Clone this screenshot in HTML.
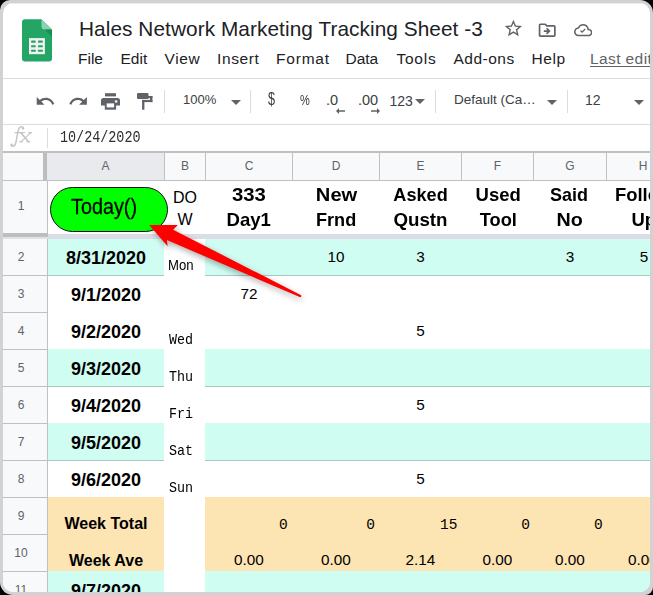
<!DOCTYPE html>
<html><head><meta charset="utf-8">
<style>
*{box-sizing:border-box}
html,body{margin:0;padding:0}
body{width:653px;height:595px;overflow:hidden;background:#000;position:relative;font-family:"Liberation Sans",sans-serif}
#frame{position:absolute;left:0;top:0;width:653px;height:595px;background:#d2d2d2;border-radius:10px 13px 8px 13px}
#app{position:absolute;left:3px;top:3px;width:647px;height:589px;background:#fff;border-radius:10px;overflow:hidden}
#c{position:absolute;left:-3px;top:-3px;width:653px;height:595px}
.a{position:absolute;white-space:pre}
.hl{position:absolute;height:1px;background:#dadce0}
.vl{position:absolute;width:1px;background:#dadce0}
.menu{font-size:15.5px;color:#202124;line-height:18px;top:50px}
.tb{color:#3c4043;font-size:13px;line-height:16px}
.ch{font-size:12px;color:#5f6368;line-height:14px;text-align:center}
.rh{font-size:12px;color:#5f6368;line-height:14px;text-align:center;left:1px;width:40px}
.h1{width:100px;text-align:center;font-weight:700;color:#000;font-size:19px;line-height:25px}
.h1 span{display:inline-block}
.bold{font-weight:700;color:#000;font-size:18px;line-height:22px;text-align:center}
.mono{font-family:"Liberation Mono",monospace;font-size:14px;color:#000;line-height:16px}
.z{font-size:14.5px;text-align:right;letter-spacing:0}
.dw{font-size:15px;transform:scaleX(0.89);transform-origin:0 0}
.num{font-size:15.3px;color:#000;line-height:16px;text-align:center}
</style></head><body>
<div id="frame"><div id="app"><div id="c">

<div class="a" style="left:0;top:3px;width:653px;height:1px;background:#ebebeb"></div>
<!-- logo -->
<svg class="a" style="left:22px;top:19px" width="30" height="43" viewBox="0 0 30 43">
  <path d="M3 0.2H19.5L30 10.5V39.5A3 3 0 0 1 27 42.5H3A3 3 0 0 1 0 39.5V3.2A3 3 0 0 1 3 0.2Z" fill="#23a566"/>
  <path d="M19.5 0.2L30 10.5H22.5A3 3 0 0 1 19.5 7.5Z" fill="#8ed1b1"/>
  <path d="M22.5 10.5L30 18V10.5Z" fill="#1c8d55"/>
  <rect x="7" y="19.1" width="15.9" height="16.1" fill="#f1f1f1"/>
  <rect x="9.1" y="21.6" width="4.6" height="2.1" rx="0.6" fill="#23a566"/><rect x="16" y="21.6" width="4.8" height="2.1" rx="0.6" fill="#23a566"/>
  <rect x="9.1" y="26.2" width="4.6" height="2.1" rx="0.6" fill="#23a566"/><rect x="16" y="26.2" width="4.8" height="2.1" rx="0.6" fill="#23a566"/>
  <rect x="9.1" y="30.75" width="4.6" height="2.1" rx="0.6" fill="#23a566"/><rect x="16" y="30.75" width="4.8" height="2.1" rx="0.6" fill="#23a566"/>
</svg>

<div class="a" style="left:79px;top:16.5px;font-size:20.8px;line-height:24px;color:#202124;letter-spacing:0.07px">Hales Network Marketing Tracking Sheet -3</div>

<!-- star -->
<svg class="a" style="left:503px;top:18px" width="20.8" height="20.8" viewBox="0 0 24 24"><path fill="#5f6368" d="M22 9.24l-7.19-.62L12 2 9.19 8.63 2 9.24l5.46 4.73L5.82 21 12 17.27 18.18 21l-1.63-7.03L22 9.24zM12 15.4l-3.76 2.27 1-4.28-3.32-2.88 4.38-.38L12 6.1l1.71 4.04 4.38.38-3.32 2.88 1 4.28L12 15.4z"/></svg>
<!-- folder -->
<svg class="a" style="left:537.3px;top:19.6px" width="20.4" height="20.4" viewBox="0 0 24 24"><path fill="#5f6368" d="M20 6h-8l-2-2H4c-1.1 0-1.99.9-1.99 2L2 18c0 1.1.9 2 2 2h16c1.1 0 2-.9 2-2V8c0-1.1-.9-2-2-2zm0 12H4V6h5.17l2 2H20v10zm-7.84-6H8v2h4.16l-1.59 1.59L11.99 17 16 13.01 11.99 9l-1.41 1.41L12.16 12z"/></svg>
<!-- cloud -->
<svg class="a" style="left:573.5px;top:20.8px" width="18.4" height="18.4" viewBox="0 0 24 24"><path fill="#5f6368" d="M19.35 10.04C18.67 6.59 15.64 4 12 4 9.11 4 6.6 5.64 5.35 8.04 2.34 8.36 0 10.91 0 14c0 3.31 2.69 6 6 6h13c2.760 0 5-2.24 5-5 0-2.64-2.05-4.78-4.65-4.96zM19 18H6c-2.21 0-4-1.79-4-4 0-2.05 1.53-3.76 3.56-3.970l1.07-.11.5-.95C8.08 7.14 9.94 6 12 6c2.62 0 4.88 1.86 5.39 4.43l.3 1.5 1.53.11c1.56.1 2.78 1.41 2.78 2.96 0 1.65-1.35 3-3 3zm-8.5-2.3l-2.6-2.6 1.1-1.1 1.5 1.5 3.6-3.6 1.1 1.1z"/></svg>

<!-- menu -->
<div class="a menu" style="left:78px">File</div>
<div class="a menu" style="left:120.5px">Edit</div>
<div class="a menu" style="left:164.5px;letter-spacing:0.6px">View</div>
<div class="a menu" style="left:217px;letter-spacing:0.6px">Insert</div>
<div class="a menu" style="left:276px;letter-spacing:0.8px">Format</div>
<div class="a menu" style="left:345.5px">Data</div>
<div class="a menu" style="left:396.5px;letter-spacing:0.75px">Tools</div>
<div class="a menu" style="left:453.5px;letter-spacing:0.5px">Add-ons</div>
<div class="a menu" style="left:531.5px;letter-spacing:0.6px">Help</div>
<div class="a menu" style="left:590px;color:#5f6368;text-decoration:underline;letter-spacing:0.4px;text-underline-offset:1.8px">Last edit was seconds ago</div>

<div class="hl" style="left:0;top:78px;width:653px"></div>

<!-- toolbar icons -->
<svg class="a" style="left:34.5px;top:90.7px" width="20.6" height="20.6" viewBox="0 0 24 24"><path fill="#5f6368" d="M12.5 8c-2.65 0-5.05.99-6.9 2.6L2 7v9h9l-3.62-3.62c1.39-1.16 3.16-1.88 5.12-1.88 3.54 0 6.550 2.31 7.6 5.5l2.37-.78C21.08 11.03 17.15 8 12.5 8z"/></svg>
<svg class="a" style="left:68px;top:90.7px" width="20.6" height="20.6" viewBox="0 0 24 24"><path fill="#5f6368" d="M18.4 10.6C16.55 8.99 14.15 8 11.5 8c-4.65 0-8.58 3.03-9.96 7.22L3.9 16c1.05-3.19 4.05-5.5 7.6-5.5 1.95 0 3.73.72 5.12 1.88L13 16h9V7l-3.6 3.6z"/></svg>
<svg class="a" style="left:101px;top:93px" width="19" height="17" viewBox="0 0 19 17">
  <rect x="4" y="0.2" width="11" height="3.2" fill="#5f6368"/>
  <path d="M2.5 5H16.5A2.5 2.5 0 0 1 19 7.5V12.4H0V7.5A2.5 2.5 0 0 1 2.5 5Z" fill="#5f6368"/>
  <rect x="3.8" y="9.5" width="11.3" height="7.2" fill="#5f6368"/>
  <rect x="5.7" y="10.4" width="7.4" height="4" fill="#fff"/>
  <rect x="13.9" y="7.4" width="2.4" height="2.1" fill="#fff"/>
</svg>
<svg class="a" style="left:136.5px;top:93px" width="16" height="17" viewBox="0 0 16 17">
  <rect x="0" y="0" width="11.5" height="6" rx="1" fill="#5f6368"/>
  <rect x="13" y="3" width="2.4" height="6.1" fill="#5f6368"/><rect x="11" y="3" width="4.4" height="2.2" fill="#5f6368"/>
  <rect x="5.1" y="6.9" width="10.3" height="2.2" fill="#5f6368"/>
  <rect x="5.1" y="6.9" width="2.3" height="9.8" fill="#5f6368"/>
</svg>
<div class="vl" style="left:164px;top:90px;height:23px"></div>
<div class="a tb" style="left:183px;top:92px">100%</div>
<svg class="a" style="left:231px;top:100px" width="10" height="5" viewBox="0 0 10 5"><path d="M0 0H10L5 5Z" fill="#5f6368"/></svg>
<div class="vl" style="left:250px;top:90px;height:23px"></div>
<div class="a" style="left:268.3px;top:90px;font-size:17.5px;line-height:18px;color:#3c4043;transform:scaleX(0.72);transform-origin:0 0">$</div>
<div class="a tb" style="left:299.5px;top:92px;font-size:14.5px;transform:scaleX(0.76);transform-origin:0 0">%</div>
<div class="a tb" style="left:326px;top:92px;font-size:14.5px">.0</div>
<svg class="a" style="left:336px;top:107.5px" width="9" height="6" viewBox="0 0 9 6"><path d="M0 3L3 0V2.2H9V3.8H3V6Z" fill="#5f6368"/></svg>
<div class="a tb" style="left:358px;top:92px;font-size:14.5px">.00</div>
<svg class="a" style="left:371px;top:107.5px" width="9" height="6" viewBox="0 0 9 6"><path d="M9 3L6 0V2.2H0V3.8H6V6Z" fill="#5f6368"/></svg>
<div class="a tb" style="left:389.5px;top:92.5px;font-size:14px">123</div>
<svg class="a" style="left:415px;top:99px" width="10" height="5" viewBox="0 0 10 5"><path d="M0 0H10L5 5Z" fill="#5f6368"/></svg>
<div class="vl" style="left:435px;top:90px;height:23px"></div>
<div class="a tb" style="left:454px;top:92px;font-size:13.5px">Default (Ca…</div>
<svg class="a" style="left:547px;top:99.5px" width="10" height="5" viewBox="0 0 10 5"><path d="M0 0H10L5 5Z" fill="#5f6368"/></svg>
<div class="vl" style="left:567px;top:90px;height:23px"></div>
<div class="a tb" style="left:585px;top:92px;font-size:14px">12</div>
<svg class="a" style="left:634px;top:99.5px" width="10" height="5" viewBox="0 0 10 5"><path d="M0 0H10L5 5Z" fill="#5f6368"/></svg>

<div class="hl" style="left:0;top:124px;width:653px"></div>

<!-- formula bar -->
<svg class="a" style="left:0;top:120px" width="40" height="30" viewBox="0 120 40 30" fill="none" stroke="#c4c4c4" stroke-linecap="round">
  <path d="M23.4 128.4C23.6 126.8 21.6 126.2 20.2 127.2C18.6 128.3 18 130.5 17.5 133.5L16 142C15.5 144.6 14.2 146.3 12.6 146.3C11.6 146.3 11.1 145.6 11.3 144.8" stroke-width="1.45"/>
  <circle cx="23" cy="128.4" r="1.2" fill="#c4c4c4" stroke="none"/>
  <circle cx="11.6" cy="144.8" r="1.2" fill="#c4c4c4" stroke="none"/>
  <path d="M15 132.6H24.5M28.6 132.6H31.8M19.5 141.8H22.6M26.6 141.8H30" stroke-width="1.1"/>
  <path d="M20.6 132.6L28.6 141.8" stroke-width="1.6"/>
  <path d="M30.8 132.6L21 141.8" stroke-width="1.1"/>
</svg>
<div class="vl" style="left:47px;top:128px;height:20px;background:#dadce0"></div>
<div class="a mono" style="left:60px;top:128.8px;font-size:16.5px;line-height:18px;color:#2d2f31;transform:scaleX(0.813);transform-origin:0 0">10/24/2020</div>

<!-- grid header -->
<div class="a" style="left:0;top:151px;width:653px;height:2px;background:#c0c0c0"></div>
<div class="a" style="left:0;top:153px;width:43px;height:27px;background:#f8f9fa"></div>
<div class="a" style="left:43px;top:153px;width:4px;height:27px;background:#bdbdbd"></div>
<div class="a" style="left:47px;top:153px;width:117px;height:27px;background:#e8eaed"></div>
<div class="a" style="left:165px;top:153px;width:488px;height:27px;background:#f8f9fa"></div>
<div class="vl" style="left:164px;top:153px;height:27px;background:#c0c0c0"></div>
<div class="vl" style="left:205px;top:153px;height:27px;background:#c0c0c0"></div>
<div class="vl" style="left:292px;top:153px;height:27px;background:#c0c0c0"></div>
<div class="vl" style="left:379px;top:153px;height:27px;background:#c0c0c0"></div>
<div class="vl" style="left:461px;top:153px;height:27px;background:#c0c0c0"></div>
<div class="vl" style="left:533px;top:153px;height:27px;background:#c0c0c0"></div>
<div class="vl" style="left:606px;top:153px;height:27px;background:#c0c0c0"></div>
<div class="a" style="left:0;top:180px;width:653px;height:1px;background:#c0c0c0"></div>
<div class="a ch" style="left:47px;top:159px;width:117px">A</div>
<div class="a ch" style="left:165px;top:159px;width:40px">B</div>
<div class="a ch" style="left:206px;top:159px;width:86px">C</div>
<div class="a ch" style="left:293px;top:159px;width:86px">D</div>
<div class="a ch" style="left:380px;top:159px;width:81px">E</div>
<div class="a ch" style="left:462px;top:159px;width:71px">F</div>
<div class="a ch" style="left:534px;top:159px;width:72px">G</div>
<div class="a ch" style="left:607px;top:159px;width:72px">H</div>

<!-- row header column -->
<div class="a" style="left:0;top:181px;width:47px;height:420px;background:#f8f9fa"></div>
<div class="a" style="left:47px;top:181px;width:1px;height:420px;background:#c0c0c0"></div>


<!-- row 1 white bg -->
<div class="a" style="left:48px;top:181px;width:605px;height:53px;background:#fff"></div>

<!-- cell backgrounds -->
<div class="a" style="left:48px;top:239px;width:605px;height:36px;background:#d0fdf2"></div>
<div class="a" style="left:48px;top:275px;width:605px;height:1px;background:#abc7c1"></div>
<div class="a" style="left:48px;top:349px;width:605px;height:37px;background:#d0fdf2"></div>
<div class="a" style="left:48px;top:386px;width:605px;height:1px;background:#abc7c1"></div>
<div class="a" style="left:48px;top:423px;width:605px;height:37px;background:#d0fdf2"></div>
<div class="a" style="left:48px;top:460px;width:605px;height:1px;background:#abc7c1"></div>
<div class="a" style="left:48px;top:497px;width:605px;height:74px;background:#fce5b3"></div>
<div class="a" style="left:48px;top:571px;width:605px;height:30px;background:#d0fdf2"></div>
<!-- column B white -->
<div class="a" style="left:164px;top:239px;width:41px;height:360px;background:#fff"></div>

<!-- row header lines & numbers -->
<div class="hl" style="left:0;top:275px;width:47px;background:#c0c0c0"></div>
<div class="hl" style="left:0;top:312px;width:47px;background:#c0c0c0"></div>
<div class="hl" style="left:0;top:349px;width:47px;background:#c0c0c0"></div>
<div class="hl" style="left:0;top:386px;width:47px;background:#c0c0c0"></div>
<div class="hl" style="left:0;top:423px;width:47px;background:#c0c0c0"></div>
<div class="hl" style="left:0;top:460px;width:47px;background:#c0c0c0"></div>
<div class="hl" style="left:0;top:497px;width:47px;background:#c0c0c0"></div>
<div class="hl" style="left:0;top:534px;width:47px;background:#c0c0c0"></div>
<div class="hl" style="left:0;top:571px;width:47px;background:#c0c0c0"></div>
<div class="a rh" style="top:199px">1</div>
<div class="a rh" style="top:250px">2</div>
<div class="a rh" style="top:287px">3</div>
<div class="a rh" style="top:324px">4</div>
<div class="a rh" style="top:361px">5</div>
<div class="a rh" style="top:398px">6</div>
<div class="a rh" style="top:435px">7</div>
<div class="a rh" style="top:472px">8</div>
<div class="a rh" style="top:509px">9</div>
<div class="a rh" style="top:546px">10</div>
<div class="a rh" style="top:583px">11</div>

<div class="a" style="left:0;top:233px;width:48px;height:4px;background:#bebebe"></div>
<div class="a" style="left:0;top:237px;width:48px;height:2px;background:#e0e2e8"></div>
<div class="a" style="left:48px;top:234px;width:605px;height:5px;background:#dadde6"></div>
<!-- row 1 content -->
<div class="a" style="left:50px;top:187px;width:118px;height:45px;background:#00ff00;border:1.8px solid #111;border-radius:23px"></div>
<div class="a" style="left:71px;top:194.7px;font-size:22.5px;line-height:24px;color:#000;transform:scaleX(0.88);transform-origin:0 0;-webkit-text-stroke:0.3px #000">Today()</div>
<div class="a" style="left:165px;top:187px;width:40px;font-size:16px;line-height:22px;color:#000;text-align:center;white-space:normal">DO<br>W</div>
<div class="a h1" style="left:199.0px;top:182px"><span style="transform:scaleX(1.070)">333</span></div>
<div class="a h1" style="left:199.0px;top:207px"><span style="transform:scaleX(0.979)">Day1</span></div>
<div class="a h1" style="left:286.5px;top:182px"><span style="transform:scaleX(1.059)">New</span></div>
<div class="a h1" style="left:286.5px;top:207px"><span style="transform:scaleX(0.953)">Frnd</span></div>
<div class="a h1" style="left:370.7px;top:182px"><span style="transform:scaleX(0.953)">Asked</span></div>
<div class="a h1" style="left:370.7px;top:207px"><span style="transform:scaleX(0.985)">Qustn</span></div>
<div class="a h1" style="left:448.2px;top:182px"><span style="transform:scaleX(0.974)">Used</span></div>
<div class="a h1" style="left:448.2px;top:207px"><span style="transform:scaleX(0.960)">Tool</span></div>
<div class="a h1" style="left:519.5px;top:182px"><span style="transform:scaleX(0.945)">Said</span></div>
<div class="a h1" style="left:519.5px;top:207px"><span style="transform:scaleX(1.037)">No</span></div>
<div class="a h1" style="left:594.0px;top:182px"><span style="transform:scaleX(0.970)">Follow</span></div>
<div class="a h1" style="left:594.0px;top:207px"><span style="transform:scaleX(0.970)">Up</span></div>

<!-- dates -->
<div class="a bold" style="left:48px;top:246.5px;width:116px">8/31/2020</div>
<div class="a bold" style="left:48px;top:283.5px;width:116px">9/1/2020</div>
<div class="a bold" style="left:48px;top:320.5px;width:116px">9/2/2020</div>
<div class="a bold" style="left:48px;top:357.5px;width:116px">9/3/2020</div>
<div class="a bold" style="left:48px;top:394.5px;width:116px">9/4/2020</div>
<div class="a bold" style="left:48px;top:431.5px;width:116px">9/5/2020</div>
<div class="a bold" style="left:48px;top:468.5px;width:116px">9/6/2020</div>
<div class="a bold" style="left:48px;top:513px;width:116px;font-size:16px">Week Total</div>
<div class="a bold" style="left:48px;top:549.5px;width:116px;font-size:16px">Week Ave</div>
<div class="a bold" style="left:48px;top:579.5px;width:116px">9/7/2020</div>

<!-- DOW -->
<div class="a" style="left:168.2px;top:256.5px;font-size:14.6px;line-height:16px;color:#000;transform:scaleX(0.9);transform-origin:0 0">Mon</div>
<div class="a mono dw" style="left:168.7px;top:332.7px">Wed</div>
<div class="a mono dw" style="left:168.7px;top:369.7px">Thu</div>
<div class="a mono dw" style="left:168.7px;top:406.7px">Fri</div>
<div class="a mono dw" style="left:168.7px;top:443.7px">Sat</div>
<div class="a mono dw" style="left:168.7px;top:480.7px">Sun</div>

<!-- numbers -->
<div class="a num" style="left:293px;top:249px;width:86px">10</div>
<div class="a num" style="left:380px;top:249px;width:81px">3</div>
<div class="a num" style="left:534px;top:249px;width:72px">3</div>
<div class="a num" style="left:634px;top:249px;width:20px">5</div>
<div class="a num" style="left:206px;top:286px;width:86px">72</div>
<div class="a num" style="left:380px;top:323px;width:81px">5</div>
<div class="a num" style="left:380px;top:397px;width:81px">5</div>
<div class="a num" style="left:380px;top:471px;width:81px">5</div>

<div class="a mono z" style="left:247.8px;top:516.5px;width:40px">0</div>
<div class="a mono z" style="left:335.0px;top:516.5px;width:40px">0</div>
<div class="a mono z" style="left:417.5px;top:516.5px;width:40px">15</div>
<div class="a mono z" style="left:490.0px;top:516.5px;width:40px">0</div>
<div class="a mono z" style="left:562.8px;top:516.5px;width:40px">0</div>

<div class="a num" style="left:206px;top:552px;width:86px">0.00</div>
<div class="a num" style="left:293px;top:552px;width:86px">0.00</div>
<div class="a num" style="left:380px;top:552px;width:81px">2.14</div>
<div class="a num" style="left:462px;top:552px;width:71px">0.00</div>
<div class="a num" style="left:534px;top:552px;width:72px">0.00</div>
<div class="a num" style="left:628px;top:552px;text-align:left">0.00</div>

<!-- arrow -->
<svg class="a" style="left:0;top:0" width="653" height="595" viewBox="0 0 653 595">
  <defs><filter id="sh" x="-20%" y="-20%" width="140%" height="140%"><feGaussianBlur stdDeviation="3"/></filter></defs>
  <path d="M149.2 224.9L177.9 225.1L173.1 229.7L300.67 295.0A1.1 1.1 0 0 1 299.73 297.0L166.9 240.0L167.6 246.3Z" fill="#000" opacity="0.33" filter="url(#sh)" transform="translate(1.5,3)"/>
  <path d="M149.2 224.9L177.9 225.1L173.1 229.7L300.67 295.0A1.1 1.1 0 0 1 299.73 297.0L166.9 240.0L167.6 246.3Z" fill="#ff0000"/>
</svg>

</div></div></div>
</body></html>
